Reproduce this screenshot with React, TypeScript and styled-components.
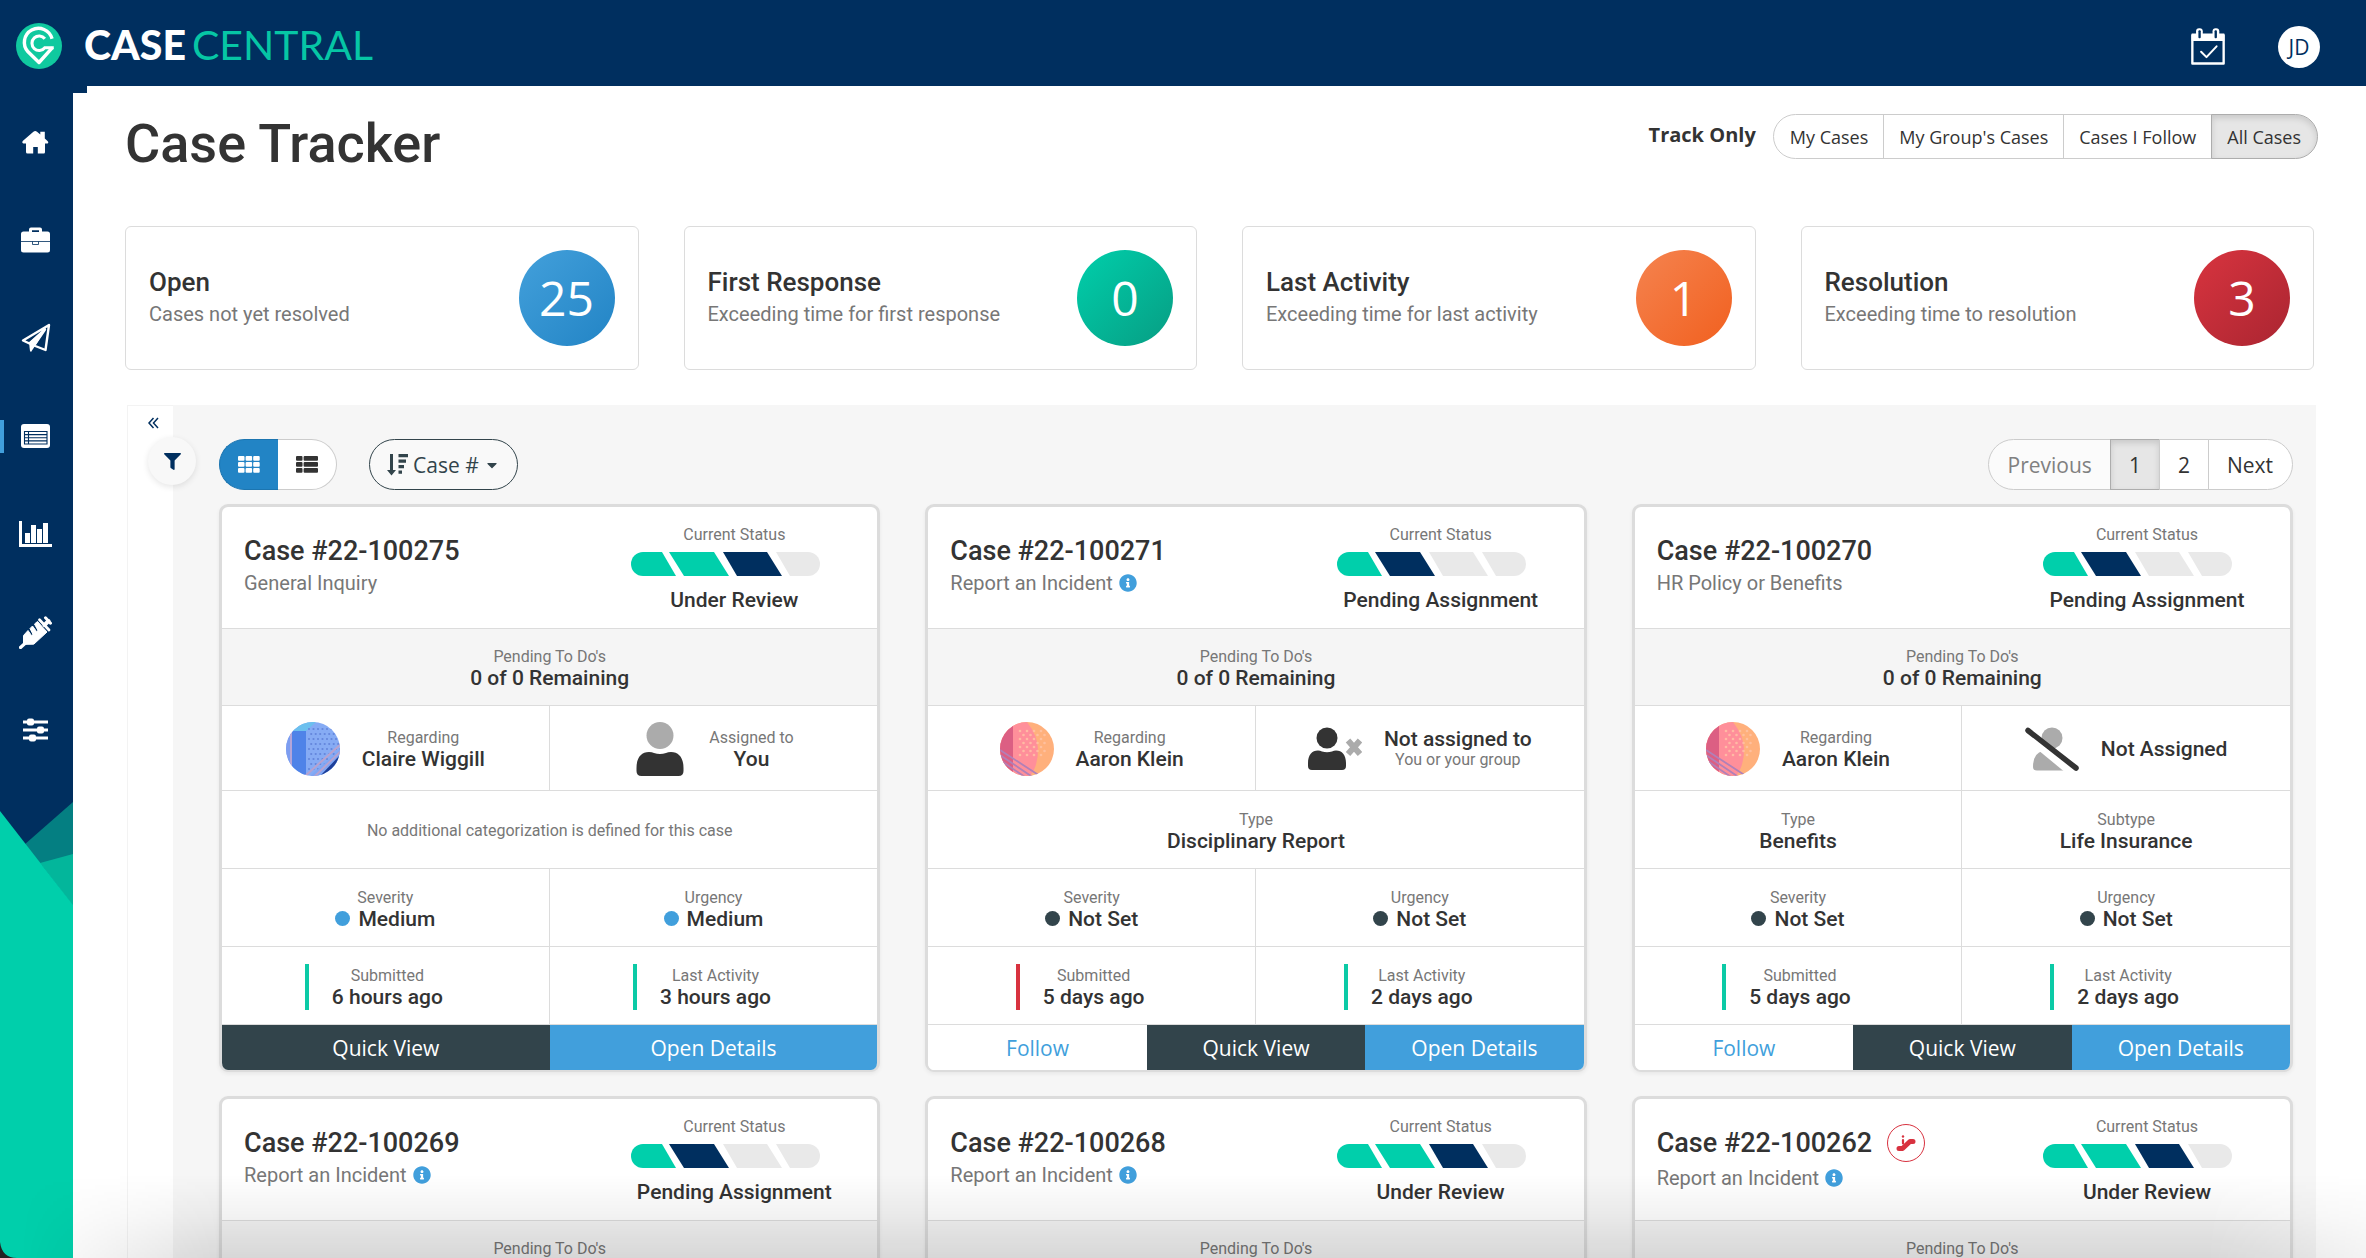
import React, { useState } from "react";
import styled, { createGlobalStyle } from "styled-components";
import { FaFilter, FaInfoCircle, FaCaretDown } from "react-icons/fa";

const color = {
  navy: "#002f5f",
  green: "#00cfab",
  blue: "#419fdc",
  deepBlue: "#2284c5",
  slate: "#32444b",
  red: "#d8323f",
  text: "#333333",
  muted: "#777777",
  line: "#dcdcdc",
  panel: "#f6f6f6",
};

const heading = `Roboto, "Liberation Sans", sans-serif`;
const body = `"Open Sans", "Noto Sans", sans-serif`;

const GlobalStyle = createGlobalStyle`
  *, *::before, *::after { box-sizing: border-box; }
  html, body, #root { height: 100%; }
  body { margin: 0; background: #fff; color: ${color.text}; font-family: ${body}; overflow: hidden; }
  h1, h2, h3, p, dl, dt, dd, ul { margin: 0; padding: 0; }
  button { margin: 0; font-family: ${body}; cursor: pointer; }
  svg { display: block; flex: none; }
`;

/* ---------- shell ---------- */

const Shell = styled.div`
  display: flex;
  flex-direction: column;
  height: 100vh;
  overflow: hidden;
`;

const TopBar = styled.header`
  display: flex;
  align-items: center;
  justify-content: space-between;
  flex: none;
  height: 86px;
  padding: 7px 46px 0 16px;
  background: ${color.navy};
`;

const Brand = styled.a`
  display: flex;
  align-items: center;
  gap: 22px;
  padding-bottom: 2px;
  text-decoration: none;
`;

const BrandName = styled.span`
  display: flex;
  gap: 6px;
  padding-bottom: 2px;
  font: 400 41px/46px Lato, sans-serif;
  color: #06c6a5;

  strong {
    font-weight: 900;
    color: #fff;
  }
`;

const TopActions = styled.div`
  display: flex;
  align-items: center;
  gap: 53px;
`;

const IconButton = styled.button`
  display: flex;
  padding: 0;
  border: 0;
  background: none;
  color: #fff;
`;

const Initials = styled.button`
  width: 42px;
  height: 42px;
  padding: 0;
  border: 0;
  border-radius: 50%;
  background: #fff;
  color: ${color.navy};
  font-size: 21px;
  line-height: 42px;
`;

const Below = styled.div`
  display: flex;
  flex: 1;
  min-height: 0;
`;

const Sidebar = styled.nav`
  position: relative;
  display: flex;
  flex-direction: column;
  flex: none;
  width: 73px;
  padding-top: 7px;
  background: ${color.navy};

  &::before {
    content: "";
    position: absolute;
    top: 0;
    left: 73px;
    width: 14px;
    height: 7px;
    background: ${color.navy};
  }
`;

const NavItem = styled.a<{ $active?: boolean }>`
  position: relative;
  display: flex;
  align-items: center;
  justify-content: center;
  height: 98px;
  padding-right: 2px;
  color: #fff;

  &::before {
    content: "";
    display: ${(p) => (p.$active ? "block" : "none")};
    position: absolute;
    left: 0;
    width: 4px;
    height: 33px;
    background: ${color.blue};
  }
`;

const SidebarArt = styled.svg`
  margin-top: auto;
`;

const Main = styled.main`
  flex: 1;
  min-width: 0;
  padding: 26px 50px 0 52px;
  overflow: hidden;
`;

const BottomShade = styled.div`
  position: fixed;
  inset: auto 0 0 0;
  height: 84px;
  background: linear-gradient(to top, rgba(0, 0, 0, 0.12), rgba(0, 0, 0, 0.05) 50%, rgba(0, 0, 0, 0));
  mask-image: linear-gradient(to right, transparent 20px, #000 220px, #000 calc(100% - 160px), rgba(0, 0, 0, 0.4));
  pointer-events: none;
`;

/* ---------- page heading ---------- */

const PageHead = styled.div`
  display: flex;
  justify-content: space-between;
  align-items: flex-start;
  margin: 0 -2px 50px 0;
`;

const PageTitle = styled.h1`
  font: 500 54px/64px ${heading};
`;

const TrackOnly = styled.div`
  display: flex;
  align-items: center;
  gap: 17px;
  padding-top: 2px;
`;

const TrackLabel = styled.span`
  padding-bottom: 4px;
  font-size: 20px;
  line-height: 28px;
  font-weight: 700;
`;

const Segments = styled.div`
  display: flex;
`;

const Segment = styled.button<{ $large?: boolean; $tone?: "on" | "faded" }>`
  height: ${(p) => (p.$large ? 51 : 45)}px;
  padding: 0 ${(p) => (p.$large ? 18 : 15)}px;
  margin-left: -1px;
  border: 1px solid ${(p) => (p.$tone === "on" ? "#adadad" : "#cccccc")};
  background: ${(p) => (p.$tone === "on" ? "#e6e6e6" : p.$tone === "faded" ? "#fbfbfb" : "#fff")};
  box-shadow: ${(p) => (p.$tone === "on" ? "inset 0 3px 6px rgba(0, 0, 0, 0.13)" : "none")};
  color: ${(p) => (p.$tone === "faded" ? "#808080" : color.text)};
  font-size: ${(p) => (p.$large ? 21 : 18)}px;

  &:first-child {
    padding-left: ${(p) => (p.$large ? 19 : 16)}px;
    margin-left: 0;
    border-radius: 26px 0 0 26px;
  }

  &:last-child {
    padding-right: ${(p) => (p.$large ? 19 : 16)}px;
    border-radius: 0 26px 26px 0;
  }
`;

/* ---------- summary tiles ---------- */

const Stats = styled.section`
  display: grid;
  grid-template-columns: repeat(4, 1fr);
  gap: 45px;
  margin: 0 2px 35px 0;
`;

const Stat = styled.article`
  display: flex;
  align-items: center;
  justify-content: space-between;
  height: 144px;
  padding: 0 23px;
  border: 1px solid ${color.line};
  border-radius: 6px;
`;

const StackedText = styled.div`
  display: flex;
  flex-direction: column;
  gap: 4px;
  padding-bottom: 5px;
`;

const Title = styled.h2`
  font: 500 26px/32px ${heading};
`;

const CaseTitle = styled.h3`
  font: 500 27px/32px ${heading};
`;

const Subtitle = styled.p`
  display: flex;
  align-items: center;
  gap: 6px;
  font: 400 20px/24px ${heading};
  color: ${color.muted};

  svg {
    color: ${color.blue};
  }
`;

const StatCount = styled.div<{ $from: string; $to: string }>`
  display: flex;
  align-items: center;
  justify-content: center;
  flex: none;
  width: 96px;
  height: 96px;
  border-radius: 50%;
  background: linear-gradient(135deg, ${(p) => p.$from}, ${(p) => p.$to});
  color: #fff;
  font-size: 48px;
  line-height: 60px;
`;

/* ---------- case panel ---------- */

const Panel = styled.section`
  display: flex;
  margin-left: 2px;
  background: ${color.panel};
`;

const Rail = styled.div`
  display: flex;
  flex-direction: column;
  flex: none;
  width: 46px;
  padding-top: 2px;
  border: solid #f3f3f3;
  border-width: 1px 0 0 1px;
  background: #fff;
`;

const CollapseButton = styled(IconButton)`
  align-self: center;
  padding: 9px 0 8px 5px;
  color: ${color.navy};
`;

const FilterButton = styled(IconButton)`
  align-items: center;
  justify-content: center;
  align-self: flex-end;
  flex: none;
  width: 48px;
  height: 48px;
  margin-right: -23px;
  border-radius: 50%;
  background: #f8f8f8;
  box-shadow: 0 2px 6px rgba(0, 0, 0, 0.1);
  color: ${color.navy};
`;

const PanelBody = styled.div`
  flex: 1;
  min-width: 0;
  padding: 34px 23px 0 46px;
`;

const Toolbar = styled.div`
  display: flex;
  align-items: center;
  justify-content: space-between;
  margin-bottom: 14px;
`;

const ToolGroup = styled.div`
  display: flex;
  gap: 32px;
`;

const ViewButton = styled.button<{ $on?: boolean }>`
  display: flex;
  align-items: center;
  justify-content: center;
  width: 59px;
  height: 51px;
  padding: 0;
  border: 1px solid ${(p) => (p.$on ? "#1c75b0" : "#cccccc")};
  background: ${(p) => (p.$on ? color.deepBlue : "#fff")};
  color: ${(p) => (p.$on ? "#fff" : color.text)};

  &:first-child {
    border-right: 0;
    border-radius: 26px 0 0 26px;
  }

  &:last-child {
    border-left: 0;
    border-radius: 0 26px 26px 0;
  }
`;

const SortButton = styled.button`
  display: flex;
  align-items: center;
  gap: 5px;
  height: 51px;
  padding: 0 17px;
  border: 1px solid ${color.slate};
  border-radius: 26px;
  background: #f9f9f9;
  color: ${color.slate};
  font-size: 21px;
`;

const CaseGrid = styled.div`
  display: grid;
  grid-template-columns: repeat(3, 1fr);
  gap: 24px 45px;
`;

const Card = styled.article`
  border: solid ${color.line};
  border-width: 3px 3px 2px;
  border-radius: 9px;
  background: #fff;
  box-shadow: 0 2px 4px rgba(0, 0, 0, 0.06);
  overflow: hidden;
`;

const CardHead = styled.header`
  display: flex;
  align-items: center;
  justify-content: space-between;
  padding: 0 22px;
  border-bottom: 1px solid ${color.line};
`;

const TitleLine = styled.div`
  display: flex;
  align-items: center;
  gap: 15px;
`;

const EscalationBadge = styled.span`
  display: flex;
  align-items: center;
  justify-content: center;
  width: 38px;
  height: 38px;
  border: 1px solid ${color.red};
  border-radius: 50%;
  color: ${color.red};
`;

const Status = styled.div`
  display: flex;
  flex-direction: column;
  align-items: center;
  width: 242px;
  padding: 18px 0 16px;

  svg {
    margin: 7px 18px 12px 0;
  }
`;

const Label = styled.p`
  font: 400 16px/20px ${heading};
  color: ${color.muted};
`;

const Value = styled.p`
  display: flex;
  align-items: center;
  justify-content: center;
  gap: 8px;
  font: 500 21px/22px ${heading};
`;

const StatusValue = styled(Value)`
  line-height: 24px;
`;

const rowHeight = { compact: 77, regular: 78, tall: 85 };

const Row = styled.div<{ $shaded?: boolean; $size?: keyof typeof rowHeight }>`
  display: grid;
  grid-auto-flow: column;
  grid-auto-columns: 1fr;
  height: ${(p) => rowHeight[p.$size ?? "regular"]}px;
  border-bottom: 1px solid ${color.line};
  background: ${(p) => (p.$shaded ? "#f5f5f5" : "#fff")};
`;

const Cell = styled.div`
  display: flex;
  align-items: center;
  justify-content: center;
  gap: 22px;
  padding-top: 2px;
  text-align: center;

  &:not(:last-child) {
    border-right: 1px solid ${color.line};
  }
`;

const Dot = styled.span<{ $color: string }>`
  width: 15px;
  height: 15px;
  border-radius: 50%;
  background: ${(p) => p.$color};
`;

const Age = styled.div<{ $late?: boolean }>`
  display: flex;
  align-items: center;
  height: 46px;
  padding: 0 23px;
  border-left: 4px solid ${(p) => (p.$late ? color.red : "#0bcaa6")};
`;

const Actions = styled.footer`
  display: grid;
  grid-auto-flow: column;
  grid-auto-columns: 1fr;
`;

const Action = styled.button<{ $bg: string; $fg?: string }>`
  height: 45px;
  padding: 0;
  border: 0;
  background: ${(p) => p.$bg};
  color: ${(p) => p.$fg ?? "#fff"};
  font-size: 21px;
`;

/* ---------- drawings ---------- */

const LogoMark = () => (
  <svg width="46" height="46" viewBox="49 38 134 134" fill="none" aria-hidden="true">
    <circle cx="116" cy="105" r="67" fill="#10c99f" />
    <path d="M154 84 A41 41 0 1 0 84 122 L116 153 L155 110" stroke="#fff" strokeWidth="10" strokeLinejoin="round" />
    <path d="M133 84 A21 21 0 1 0 133 110 H159" stroke="#fff" strokeWidth="9" />
  </svg>
);

const CalendarIcon = () => (
  <svg width="34" height="37" viewBox="33 42 101 109" fill="none" aria-hidden="true">
    <path d="M37 147 V63 H130 V147 Z" stroke="#fff" strokeWidth="7" strokeLinejoin="round" />
    <path d="M35 58 h97 v22 h-97z" fill="#fff" />
    <rect x="48" y="42" width="20" height="32" rx="9" fill="#fff" />
    <rect x="97" y="42" width="20" height="32" rx="9" fill="#fff" />
    <rect x="55" y="48" width="7" height="24" rx="3" fill={color.navy} />
    <rect x="103" y="48" width="7" height="24" rx="3" fill={color.navy} />
    <path d="M63 112 L79 128 L109 96" stroke="#fff" strokeWidth="6" strokeLinecap="round" strokeLinejoin="round" />
  </svg>
);

const HomeIcon = () => (
  <svg width="27" height="23" viewBox="0 0 27 23" fill="currentColor" aria-hidden="true">
    <path d="M11.4.8 1 9.800Q-.6 11.400 1.400 12.600H4V21q0 1.500 1.500 1.500h5.700V16h4.600v6.500h6Q23 22.500 23 21V12.600h2.600Q27 11.400 25.500 9.900L22.800 7.500V.7h-4.500V3.500L15 .8Q13.200-.6 11.400.8z" />
  </svg>
);

const BriefcaseIcon = () => (
  <svg width="29" height="26" viewBox="0 0 29 26" aria-hidden="true">
    <path fill="currentColor" d="M8 4.500V2.500Q8 .5 10 .5h9q2 0 2 2v2h5.500Q29 4.500 29 7v16q0 2.500-2.500 2.500h-24Q0 25.500 0 23V7q0-2.500 2.500-2.500zM11 3.300v1.600h7V3.300z" />
    <path d="M0 14.500H29M11.500 14.500V17.500H17.500V14.500" fill="none" stroke={color.navy} strokeWidth="1" opacity="0.8" />
  </svg>
);

const PlaneIcon = () => (
  <svg width="30" height="30" viewBox="0 0 30 30" fill="none" aria-hidden="true">
    <path d="M28 2 L2 17.500 L8.500 20.500 L24 6.500 L13 22.500 L24.500 27 Z" stroke="currentColor" strokeWidth="2.400" strokeLinejoin="round" />
    <path d="M8 19.500 L25 5 L16 20 L10 29 L9 28 Z" fill="currentColor" />
  </svg>
);

const ListCardIcon = () => (
  <svg width="29" height="24" viewBox="0 0 29 24" aria-hidden="true">
    <rect width="29" height="24" rx="3" fill="currentColor" />
    <path d="M3.500 7.500h22.500v12.500h-22.500zM3.500 10.600h22.500M3.500 13.700h22.500M3.500 16.900h22.500M7.500 7.500v12.500" fill="none" stroke={color.navy} strokeWidth="1.100" />
  </svg>
);

const ChartIcon = () => (
  <svg width="33" height="26" viewBox="0 0 33 26" fill="currentColor" aria-hidden="true">
    <path d="M0 0h3v23h30v3H0zM6 12h5v10H6zM12 4h5v18h-5zM18 8h5v14h-5zM24 2h5v20h-5z" />
  </svg>
);

const SyringeIcon = () => (
  <svg width="33" height="33" viewBox="0 0 33 33" fill="none" stroke="currentColor" strokeLinecap="round" aria-hidden="true">
    <path d="M1.500 31.500 L7 26.500" strokeWidth="3.200" />
    <path d="M4.500 28 V19.500 L9 14.500 L12.500 19.500 L14 18.500 L11 12.500 L13.500 10 L17.500 15.500 L19 14.500 L15.500 8 L18.500 5.500 L28 16 L15 28 Z" fill="currentColor" strokeWidth="1" strokeLinejoin="round" />
    <path d="M20.500 3.800 L30 14" strokeWidth="2.800" />
    <path d="M25.500 9 L29.500 5" strokeWidth="4" />
    <path d="M26.500 1.800 L31.500 7.200" strokeWidth="3" />
  </svg>
);

const SlidersIcon = () => (
  <svg width="25" height="24" viewBox="0 0 25 24" fill="currentColor" aria-hidden="true">
    <path d="M0 2.500h25v3H0zM0 10.500h25v3H0zM0 18.500h25v3H0z" />
    <rect x="4" y="0.500" width="7" height="7" rx="2" />
    <rect x="14" y="8.500" width="7" height="7" rx="2" />
    <rect x="6" y="16.500" width="7" height="7" rx="2" />
  </svg>
);

const ThreeByThreeIcon = () => (
  <svg width="22" height="17" viewBox="0 0 22 17" fill="currentColor" aria-hidden="true">
    {[0, 1, 2].map((r) =>
      [0, 1, 2].map((c) => <rect key={`${r}${c}`} x={c * 7.6} y={r * 6} width="6.500" height="4.800" rx="1" />)
    )}
  </svg>
);

const RowsIcon = () => (
  <svg width="22" height="17" viewBox="0 0 22 17" fill="currentColor" aria-hidden="true">
    {[0, 6, 12].map((y) => (
      <g key={y}>
        <rect y={y} width="6.500" height="4.800" rx="1" />
        <rect x="7.600" y={y} width="14.400" height="4.800" rx="1" />
      </g>
    ))}
  </svg>
);

const SortIcon = () => (
  <svg width="21" height="22" viewBox="0 0 21 22" fill="currentColor" aria-hidden="true">
    <path d="M3 0h3v16h3l-4.500 5.500L0 16h3zM11.500 0H21v3.200h-9.500zM11.500 5.500H19v3.200h-7.500zM11.500 11H17v3.200h-5.500zM11.500 16.500H15v3.200h-3.500z" />
  </svg>
);

const DoubleChevron = () => (
  <svg width="11" height="12" viewBox="0 0 11 12" fill="none" stroke="currentColor" strokeWidth="1.500" aria-hidden="true">
    <path d="M5.500 1 L1 6 L5.500 11 M10 1 L5.500 6 L10 11" />
  </svg>
);

const EscalatorIcon = () => (
  <svg width="20" height="17" viewBox="0 0 20 17" fill="none" stroke="currentColor" strokeLinecap="round" strokeLinejoin="round" aria-hidden="true">
    <path d="M3 13.500 H6.500 L14 6.500 H17" strokeWidth="5" />
    <path d="M7 5 V8.500" strokeWidth="2.200" />
    <circle cx="7" cy="1.500" r="1.200" fill="currentColor" stroke="none" />
  </svg>
);

const BlueAvatar = () => (
  <svg width="54" height="54" viewBox="0 0 54 54" aria-hidden="true">
    <clipPath id="blueRound"><circle cx="27" cy="27" r="27" /></clipPath>
    <g clipPath="url(#blueRound)">
      <rect width="54" height="54" fill="#86abf4" />
      <rect width="5" height="54" fill="#7d9df0" />
      <rect x="4" width="2" height="54" fill="#b4a5d8" />
      <rect x="6" y="9" width="14" height="45" fill="#4f83e8" />
      <path d="M6 9 L14 0 H30 L20 9 Z" fill="#6cc0ee" />
      {[...Array(9)].map((_, r) =>
        [...Array(8)].map((__, c) => (
          <circle key={`${r}-${c}`} cx={23 + c * 4.5 + (r % 2) * 2.2} cy={7 + r * 5} r="1.100" fill="#6486dc" />
        ))
      )}
      <path d="M56 26 V54 H24 Z" fill="#7fa6f4" />
      <path d="M56 31 V54 H34 Z" fill="#1d3f99" />
      <path d="M18 55 L56 21 M27 56 L56 28" stroke="#b7a2cf" strokeWidth="2" />
    </g>
  </svg>
);

const CoralAvatar = () => (
  <svg width="54" height="54" viewBox="0 0 54 54" aria-hidden="true">
    <clipPath id="coralRound"><circle cx="27" cy="27" r="27" /></clipPath>
    <g clipPath="url(#coralRound)">
      <rect width="54" height="54" fill="#ffb07c" />
      <path d="M0 0 H27 Q38 14 38 28 Q38 44 30 54 H0 Z" fill="#ff8f9a" />
      <rect width="13" height="54" fill="#dc5f83" />
      {[...Array(7)].map((_, r) =>
        [...Array(4)].map((__, c) => (
          <circle key={`${r}-${c}`} cx={20 + c * 7 + (r % 2) * 3.5} cy={9 + r * 4} r="1.300" fill="#ffc4a6" opacity="0.800" />
        ))
      )}
      <path d="M0 28 L40 54 M0 33 L34 56 M0 38 L28 57" stroke="#b180b8" strokeWidth="1.800" />
    </g>
  </svg>
);

const PersonIcon = () => (
  <svg width="54" height="54" viewBox="0 0 54 54" aria-hidden="true">
    <circle cx="27" cy="13.500" r="13.500" fill="#ababab" />
    <path fill="#333" d="M3.500 49V46C3.500 36 8 30 16 30q3 0 5 1 6 2 12 0 2-1 5-1c8 0 12.500 6 12.500 16v3q0 5-5 5h-37q-5 0-5-5z" />
  </svg>
);

const PersonRemovedIcon = () => (
  <svg width="54" height="44" viewBox="0 0 54 44" aria-hidden="true">
    <circle cx="19" cy="11" r="10.500" fill="#333" />
    <path fill="#333" d="M0 39V36C0 28 4 23.500 10 23.500q2 0 4 1 5 1.500 10 0 2-1 4-1c6 0 10 4.500 10 12.500v3q0 4-4 4h-30q-4 0-4-4z" />
    <path d="M40 13.500 L52 27 M52 13.500 L40 27" stroke="#ababab" strokeWidth="6" />
  </svg>
);

const PersonSlashIcon = () => (
  <svg width="54" height="44" viewBox="0 0 54 44" aria-hidden="true">
    <circle cx="27" cy="11" r="10.500" fill="#ababab" />
    <path fill="#ababab" d="M8 40Q8 26 18 24L42 43.500H12Q8 43.500 8 40z" />
    <path d="M-1 5.500 L48 46" stroke="#fff" strokeWidth="9" />
    <path d="M3 3.500 L51 41" stroke="#333" strokeWidth="5.500" strokeLinecap="round" />
  </svg>
);

const STEP_SHAPES = [
  "M12 0H31L45 24H12A12 12 0 0 1 12 0z",
  "M38 0H83L98 24H53z",
  "M92 0H136L151 24H106z",
  "M145 0H177A12 12 0 0 1 177 24H159z",
];

const StepBar = ({ current }: { current: number }) => (
  <svg width="189" height="24" viewBox="0 0 189 24" aria-hidden="true">
    {STEP_SHAPES.map((d, i) => (
      <path key={d} d={d} fill={i < current ? color.green : i === current ? color.navy : "#e9e9e9"} />
    ))}
  </svg>
);

/* ---------- data ---------- */

const navItems = [
  { name: "Home", Icon: HomeIcon },
  { name: "Cases", Icon: BriefcaseIcon },
  { name: "Send", Icon: PlaneIcon },
  { name: "Tracker", Icon: ListCardIcon },
  { name: "Reports", Icon: ChartIcon },
  { name: "Health", Icon: SyringeIcon },
  { name: "Settings", Icon: SlidersIcon },
];

const stats = [
  { title: "Open", note: "Cases not yet resolved", count: 25, from: "#43a0db", to: "#2284c5" },
  { title: "First Response", note: "Exceeding time for first response", count: 0, from: "#00cfab", to: "#079d83" },
  { title: "Last Activity", note: "Exceeding time for last activity", count: 1, from: "#f5834f", to: "#f1601f" },
  { title: "Resolution", note: "Exceeding time to resolution", count: 3, from: "#d8343f", to: "#aa2531" },
];

type Person = { icon: React.ReactNode; label?: string; name: string; note?: string };
type Details = {
  people: Person[];
  category: { label?: string; value?: string; note?: string }[];
  level: string;
  levelColor: string;
  submitted: string;
  late?: boolean;
  activity: string;
  follow?: boolean;
};
type CaseItem = {
  id: string;
  kind: string;
  info?: boolean;
  escalated?: boolean;
  step: number;
  status: string;
  details?: Details;
};

const aaron: Person = { icon: <CoralAvatar />, label: "Regarding", name: "Aaron Klein" };

const cases: CaseItem[] = [
  {
    id: "22-100275",
    kind: "General Inquiry",
    step: 2,
    status: "Under Review",
    details: {
      people: [
        { icon: <BlueAvatar />, label: "Regarding", name: "Claire Wiggill" },
        { icon: <PersonIcon />, label: "Assigned to", name: "You" },
      ],
      category: [{ note: "No additional categorization is defined for this case" }],
      level: "Medium",
      levelColor: color.blue,
      submitted: "6 hours ago",
      activity: "3 hours ago",
    },
  },
  {
    id: "22-100271",
    kind: "Report an Incident",
    info: true,
    step: 1,
    status: "Pending Assignment",
    details: {
      people: [aaron, { icon: <PersonRemovedIcon />, name: "Not assigned to", note: "You or your group" }],
      category: [{ label: "Type", value: "Disciplinary Report" }],
      level: "Not Set",
      levelColor: color.slate,
      submitted: "5 days ago",
      late: true,
      activity: "2 days ago",
      follow: true,
    },
  },
  {
    id: "22-100270",
    kind: "HR Policy or Benefits",
    step: 1,
    status: "Pending Assignment",
    details: {
      people: [aaron, { icon: <PersonSlashIcon />, name: "Not Assigned" }],
      category: [
        { label: "Type", value: "Benefits" },
        { label: "Subtype", value: "Life Insurance" },
      ],
      level: "Not Set",
      levelColor: color.slate,
      submitted: "5 days ago",
      activity: "2 days ago",
      follow: true,
    },
  },
  { id: "22-100269", kind: "Report an Incident", info: true, step: 1, status: "Pending Assignment" },
  { id: "22-100268", kind: "Report an Incident", info: true, step: 2, status: "Under Review" },
  { id: "22-100262", kind: "Report an Incident", info: true, escalated: true, step: 2, status: "Under Review" },
];

/* ---------- case card ---------- */

const CaseDetails = ({ d }: { d: Details }) => (
  <>
    <Row $size="tall">
      {d.people.map((p) => (
        <Cell key={p.name}>
          {p.icon}
          <div>
            {p.label && <Label>{p.label}</Label>}
            <Value>{p.name}</Value>
            {p.note && <Label>{p.note}</Label>}
          </div>
        </Cell>
      ))}
    </Row>
    <Row>
      {d.category.map((c, i) => (
        <Cell key={i}>
          <div>
            {c.note && <Label>{c.note}</Label>}
            {c.label && <Label>{c.label}</Label>}
            {c.value && <Value>{c.value}</Value>}
          </div>
        </Cell>
      ))}
    </Row>
    <Row>
      {["Severity", "Urgency"].map((name) => (
        <Cell key={name}>
          <div>
            <Label>{name}</Label>
            <Value>
              <Dot $color={d.levelColor} />
              {d.level}
            </Value>
          </div>
        </Cell>
      ))}
    </Row>
    <Row>
      <Cell>
        <Age $late={d.late}>
          <div>
            <Label>Submitted</Label>
            <Value>{d.submitted}</Value>
          </div>
        </Age>
      </Cell>
      <Cell>
        <Age>
          <div>
            <Label>Last Activity</Label>
            <Value>{d.activity}</Value>
          </div>
        </Age>
      </Cell>
    </Row>
    <Actions>
      {d.follow && <Action $bg="#fff" $fg={color.blue}>Follow</Action>}
      <Action $bg={color.slate}>Quick View</Action>
      <Action $bg={color.blue}>Open Details</Action>
    </Actions>
  </>
);

const CaseCard = ({ item }: { item: CaseItem }) => (
  <Card>
    <CardHead>
      <StackedText>
        <TitleLine>
          <CaseTitle>Case #{item.id}</CaseTitle>
          {item.escalated && (
            <EscalationBadge>
              <EscalatorIcon />
            </EscalationBadge>
          )}
        </TitleLine>
        <Subtitle>
          {item.kind}
          {item.info && <FaInfoCircle size={18} />}
        </Subtitle>
      </StackedText>
      <Status>
        <Label>Current Status</Label>
        <StepBar current={item.step} />
        <StatusValue>{item.status}</StatusValue>
      </Status>
    </CardHead>
    <Row $shaded $size="compact">
      <Cell>
        <div>
          <Label>Pending To Do's</Label>
          <Value>0 of 0 Remaining</Value>
        </div>
      </Cell>
    </Row>
    {item.details && <CaseDetails d={item.details} />}
  </Card>
);

/* ---------- page ---------- */

const scopes = ["My Cases", "My Group's Cases", "Cases I Follow", "All Cases"];

export default function App() {
  const [scope, setScope] = useState("All Cases");
  const [view, setView] = useState<"grid" | "list">("grid");

  return (
    <Shell>
      <GlobalStyle />
      <TopBar>
        <Brand href="#" aria-label="Case Central">
          <LogoMark />
          <BrandName>
            <strong>CASE</strong>
            <span>CENTRAL</span>
          </BrandName>
        </Brand>
        <TopActions>
          <IconButton aria-label="Calendar">
            <CalendarIcon />
          </IconButton>
          <Initials>JD</Initials>
        </TopActions>
      </TopBar>
      <Below>
        <Sidebar>
          {navItems.map(({ name, Icon }) => (
            <NavItem key={name} href="#" aria-label={name} $active={name === "Tracker"}>
              <Icon />
            </NavItem>
          ))}
          <SidebarArt width="73" height="456" viewBox="0 802 73 456" aria-hidden="true">
            <path d="M73 802V855L38 866L24 845z" fill="#047f82" />
            <path d="M73 854V906L40 863z" fill="#03b69b" />
            <path d="M0 811L73 905V1258H0z" fill={color.green} />
            <path d="M0 1242Q2 1258 17 1258H0z" fill="#222" />
          </SidebarArt>
        </Sidebar>
        <Main>
          <PageHead>
            <PageTitle>Case Tracker</PageTitle>
            <TrackOnly>
              <TrackLabel>Track Only</TrackLabel>
              <Segments>
                {scopes.map((s) => (
                  <Segment key={s} $tone={s === scope ? "on" : undefined} onClick={() => setScope(s)}>
                    {s}
                  </Segment>
                ))}
              </Segments>
            </TrackOnly>
          </PageHead>
          <Stats>
            {stats.map((s) => (
              <Stat key={s.title}>
                <StackedText>
                  <Title>{s.title}</Title>
                  <Subtitle>{s.note}</Subtitle>
                </StackedText>
                <StatCount $from={s.from} $to={s.to}>{s.count}</StatCount>
              </Stat>
            ))}
          </Stats>
          <Panel>
            <Rail>
              <CollapseButton aria-label="Collapse filters">
                <DoubleChevron />
              </CollapseButton>
              <FilterButton aria-label="Filter">
                <FaFilter size={17} />
              </FilterButton>
            </Rail>
            <PanelBody>
              <Toolbar>
                <ToolGroup>
                  <Segments>
                    <ViewButton $on={view === "grid"} aria-label="Grid view" onClick={() => setView("grid")}>
                      <ThreeByThreeIcon />
                    </ViewButton>
                    <ViewButton $on={view === "list"} aria-label="List view" onClick={() => setView("list")}>
                      <RowsIcon />
                    </ViewButton>
                  </Segments>
                  <SortButton>
                    <SortIcon />
                    Case #
                    <FaCaretDown size={16} />
                  </SortButton>
                </ToolGroup>
                <Segments>
                  <Segment $large $tone="faded">Previous</Segment>
                  <Segment $large $tone="on">1</Segment>
                  <Segment $large>2</Segment>
                  <Segment $large>Next</Segment>
                </Segments>
              </Toolbar>
              <CaseGrid>
                {cases.map((c) => (
                  <CaseCard key={c.id} item={c} />
                ))}
              </CaseGrid>
            </PanelBody>
          </Panel>
        </Main>
      </Below>
      <BottomShade />
    </Shell>
  );
}
